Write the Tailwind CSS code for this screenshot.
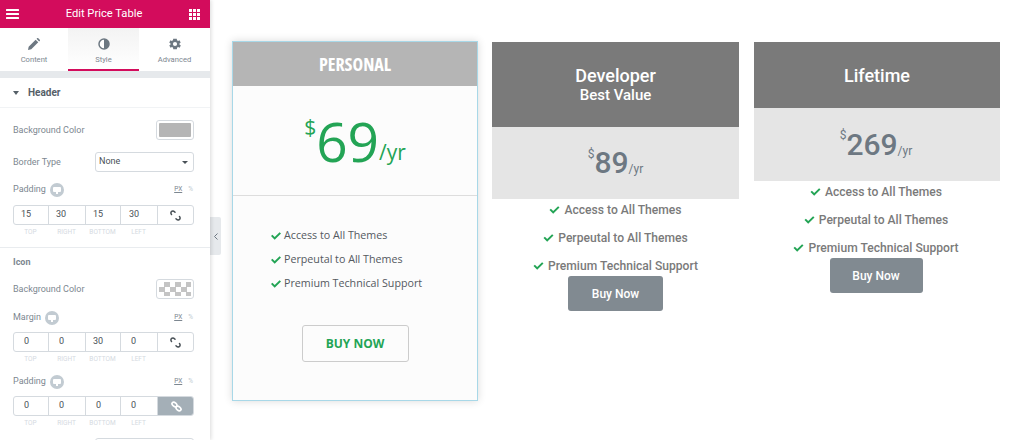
<!DOCTYPE html>
<html lang="en">
<head>
  <meta charset="UTF-8" />
  <meta name="viewport" content="width=device-width, initial-scale=1" />
  <title>Edit Price Table</title>
  <script src="https://cdn.jsdelivr.net/npm/@tailwindcss/browser@4"></script>
</head>
<body class="bg-white h-[440px] overflow-hidden flex font-['Roboto',sans-serif]">

  <!-- editor panel -->
  <aside class="w-[210px] h-[440px] shrink-0 bg-white overflow-hidden flex flex-col text-[#7d8790] shadow-[1px_0_4px_rgba(0,0,0,0.15)] z-10">
    <div class="h-[28px] shrink-0 bg-[#d30c5c] flex items-center justify-between pl-[6px] pr-[10px] text-white">
      <svg width="13" height="10" viewBox="0 0 13 10" fill="white"><rect width="13" height="2" y="0" rx="0.5"/><rect width="13" height="2" y="4" rx="0.5"/><rect width="13" height="2" y="8" rx="0.5"/></svg>
      <span class="text-[11.2px]">Edit Price Table</span>
      <svg width="11" height="11" viewBox="0 0 11 11" fill="white"><rect width="3" height="3"/><rect x="4" width="3" height="3"/><rect x="8" width="3" height="3"/><rect y="4" width="3" height="3"/><rect x="4" y="4" width="3" height="3"/><rect x="8" y="4" width="3" height="3"/><rect y="8" width="3" height="3"/><rect x="4" y="8" width="3" height="3"/><rect x="8" y="8" width="3" height="3"/></svg>
    </div>

    <div class="h-[43px] shrink-0 flex">
      <div class="w-[68px] flex flex-col items-center pt-[10px] gap-[5px]">
        <svg width="12" height="12" viewBox="0 0 11 11" fill="#6d7882"><path d="M0 11l.6-3L7 1.600 9.400 4 3 10.400zM7.800.800l.6-.6c.3-.3.7-.3 1 0l1.400 1.400c.3.3.3.7 0 1l-.6.6z"/></svg>
        <span class="text-[7.6px] leading-[10px]">Content</span>
      </div>
      <div class="w-[71px] flex flex-col items-center pt-[10px] gap-[5px] bg-gradient-to-b from-[#f3f3f3] to-white border-b-2 border-[#d30c5c]">
        <svg width="12" height="12" viewBox="0 0 12 12"><circle cx="6" cy="6" r="5" fill="white" stroke="#6d7882" stroke-width="1.500"/><path d="M6 1a5 5 0 0 1 0 10z" fill="#6d7882"/></svg>
        <span class="text-[7.6px] leading-[10px]">Style</span>
      </div>
      <div class="w-[71px] flex flex-col items-center pt-[10px] gap-[5px]">
        <svg width="12" height="12" viewBox="3 2 18 20" fill="#6d7882"><path fill-rule="evenodd" d="M19.400 13a7.600 7.600 0 0 0 0-2l2.100-1.600-2-3.500-2.500 1a7.500 7.500 0 0 0-1.700-1L15 3.200h-6l-.4 2.700a7.500 7.500 0 0 0-1.700 1l-2.500-1-2 3.500L4.600 11a7.600 7.600 0 0 0 0 2l-2.100 1.600 2 3.500 2.500-1a7.500 7.500 0 0 0 1.700 1l.4 2.700h6l.4-2.700a7.500 7.500 0 0 0 1.700-1l2.500 1 2-3.500zM12 15.500a3.500 3.500 0 1 1 0-7 3.500 3.500 0 0 1 0 7z"/></svg>
        <span class="text-[7.6px] leading-[10px]">Advanced</span>
      </div>
    </div>

    <div class="h-[7px] shrink-0 bg-[#e6e9ec]"></div>

    <!-- Header section -->
    <div class="h-[30px] shrink-0 flex items-center pl-[13px] gap-[9px] border-b border-[#f1f3f5]">
      <svg width="6" height="4" viewBox="0 0 6 4" fill="#556068"><path d="M0 0h6L3 4z"/></svg>
      <span class="text-[10px] font-bold text-[#556068]">Header</span>
    </div>

    <div class="pl-[13px] pr-[16px]">
      <div class="h-[20px] mt-[12px] flex items-center justify-between">
        <span class="text-[9px] mt-[2px]">Background Color</span>
        <div class="w-[38px] h-[20px] border border-[#d5dadf] rounded-[3px] p-[2px]"><div class="w-full h-full bg-[#b5b5b5] rounded-[1px]"></div></div>
      </div>
      <div class="h-[20px] mt-[12px] flex items-center justify-between">
        <span class="text-[9px] mt-[2px]">Border Type</span>
        <div class="w-[99px] h-[20px] border border-[#d5dadf] rounded-[3px] flex items-center justify-between pl-[3px] pr-[5px] text-[9px] text-[#495157]">
          None
          <svg width="6" height="3" viewBox="0 0 6 3" fill="#495157"><path d="M0 0h6L3 3z"/></svg>
        </div>
      </div>

      <div class="flex items-center justify-between mt-[9px] h-[18px]">
        <div class="flex items-center gap-[4px]">
          <span class="text-[9px]">Padding</span>
          <span class="w-[14px] h-[14px] rounded-full bg-[#c2cbd2] flex items-center justify-center"><svg width="8" height="7" viewBox="0 0 8 7" fill="white"><rect width="8" height="5" rx="1"/><rect x="3" y="5" width="2" height="2"/></svg></span>
        </div>
        <div class="flex items-center gap-[6px] text-[6.5px] pr-[1px]"><span class="underline">PX</span><span class="text-[#c2cbd2]">%</span></div>
      </div>

      <div class="grid grid-cols-[35px_37px_35px_37px_35px] h-[20px] mt-[6px] border border-[#d5dadf] rounded-[3px] text-[9px] text-[#495157]">
        <div class="border-r border-[#d5dadf] flex items-center pl-[7px]">15</div>
        <div class="border-r border-[#d5dadf] flex items-center pl-[7px]">30</div>
        <div class="border-r border-[#d5dadf] flex items-center pl-[7px]">15</div>
        <div class="border-r border-[#d5dadf] flex items-center pl-[8px]">30</div>
        <div class="flex items-center justify-center">
          <svg width="11" height="11" viewBox="0 0 11 11" fill="none" stroke="#495157" stroke-width="1.500" stroke-linecap="round"><path d="M1.500 4.500C.5 3.500.8 1.800 2 1.200c.9-.4 1.800-.2 2.500.5l.5.5M9.500 6.500c1 1 .7 2.700-.5 3.300-.9.4-1.800.2-2.500-.5L6 8.800"/></svg>
        </div>
      </div>
      <div class="grid grid-cols-[35px_37px_35px_37px_35px] h-[16px] text-[6.5px] text-[#d5dadf] text-center items-center">
        <span>TOP</span><span>RIGHT</span><span>BOTTOM</span><span>LEFT</span><span></span>
      </div>
    </div>

    <div class="h-px mt-[6px] shrink-0 bg-[#e9ecef]"></div>

    <div class="pl-[13px] pr-[16px]">
      <div class="text-[9px] font-bold mt-[9px] leading-[11px]">Icon</div>
      <div class="h-[20px] mt-[11px] flex items-center justify-between">
        <span class="text-[9px] mt-[2px]">Background Color</span>
        <div class="w-[38px] h-[20px] border border-[#d5dadf] rounded-[3px] p-[2px]">
          <div class="w-full h-full bg-[repeating-conic-gradient(#c4c4c4_0_25%,#ffffff_0_50%)] bg-[length:11px_10px]"></div>
        </div>
      </div>

      <div class="flex items-center justify-between mt-[10px] h-[18px]">
        <div class="flex items-center gap-[4px]">
          <span class="text-[9px]">Margin</span>
          <span class="w-[14px] h-[14px] rounded-full bg-[#c2cbd2] flex items-center justify-center"><svg width="8" height="7" viewBox="0 0 8 7" fill="white"><rect width="8" height="5" rx="1"/><rect x="3" y="5" width="2" height="2"/></svg></span>
        </div>
        <div class="flex items-center gap-[6px] text-[6.5px] pr-[1px]"><span class="underline">PX</span><span class="text-[#c2cbd2]">%</span></div>
      </div>
      <div class="grid grid-cols-[35px_37px_35px_37px_35px] h-[20px] mt-[5px] border border-[#d5dadf] rounded-[3px] text-[9px] text-[#495157]">
        <div class="border-r border-[#d5dadf] flex items-center pl-[10px]">0</div>
        <div class="border-r border-[#d5dadf] flex items-center pl-[10px]">0</div>
        <div class="border-r border-[#d5dadf] flex items-center pl-[7px]">30</div>
        <div class="border-r border-[#d5dadf] flex items-center pl-[10px]">0</div>
        <div class="flex items-center justify-center">
          <svg width="11" height="11" viewBox="0 0 11 11" fill="none" stroke="#495157" stroke-width="1.500" stroke-linecap="round"><path d="M1.500 4.500C.5 3.500.8 1.800 2 1.200c.9-.4 1.800-.2 2.500.5l.5.5M9.500 6.500c1 1 .7 2.700-.5 3.300-.9.4-1.800.2-2.500-.5L6 8.800"/></svg>
        </div>
      </div>
      <div class="grid grid-cols-[35px_37px_35px_37px_35px] h-[16px] text-[6.5px] text-[#d5dadf] text-center items-center">
        <span>TOP</span><span>RIGHT</span><span>BOTTOM</span><span>LEFT</span><span></span>
      </div>

      <div class="flex items-center justify-between mt-[5px] h-[18px]">
        <div class="flex items-center gap-[4px]">
          <span class="text-[9px]">Padding</span>
          <span class="w-[14px] h-[14px] rounded-full bg-[#c2cbd2] flex items-center justify-center"><svg width="8" height="7" viewBox="0 0 8 7" fill="white"><rect width="8" height="5" rx="1"/><rect x="3" y="5" width="2" height="2"/></svg></span>
        </div>
        <div class="flex items-center gap-[6px] text-[6.5px] pr-[1px]"><span class="underline">PX</span><span class="text-[#c2cbd2]">%</span></div>
      </div>
      <div class="grid grid-cols-[35px_37px_35px_37px_36px] h-[20px] mt-[5px] border border-[#d5dadf] rounded-[3px] overflow-hidden text-[9px] text-[#495157]">
        <div class="border-r border-[#d5dadf] flex items-center pl-[10px]">0</div>
        <div class="border-r border-[#d5dadf] flex items-center pl-[10px]">0</div>
        <div class="border-r border-[#d5dadf] flex items-center pl-[10px]">0</div>
        <div class="border-r border-[#d5dadf] flex items-center pl-[10px]">0</div>
        <div class="flex items-center justify-center bg-[#a4afb7]">
          <svg width="11" height="11" viewBox="0 0 11 11" fill="none" stroke="white" stroke-width="1.700"><ellipse cx="3.500" cy="3.500" rx="2.800" ry="1.900" transform="rotate(40 3.500 3.500)"/><ellipse cx="7.500" cy="7.500" rx="2.800" ry="1.900" transform="rotate(40 7.500 7.500)"/></svg>
        </div>
      </div>
      <div class="grid grid-cols-[35px_37px_35px_37px_35px] h-[16px] text-[6.5px] text-[#d5dadf] text-center items-center">
        <span>TOP</span><span>RIGHT</span><span>BOTTOM</span><span>LEFT</span><span></span>
      </div>
      <div class="ml-[82px] h-[20px] mt-[6px] border border-[#d5dadf] rounded-[3px]"></div>
    </div>
  </aside>

  <!-- preview -->
  <main class="relative flex-1 h-[440px] pl-[22px] pr-[23px] pt-[41px]">
    <button class="absolute left-0 top-[217px] w-[11px] h-[38px] bg-[#e6e9ec] flex items-center justify-center rounded-r-[2px]">
      <svg width="4" height="7" viewBox="0 0 4 7" fill="none" stroke="#6d7882" stroke-width="1"><path d="M3.500.500.500 3.500l3 3"/></svg>
    </button>

    <div class="grid grid-cols-[246px_247px_247px] gap-x-[14px] items-start">

      <!-- personal, selected -->
      <div class="h-[360px] bg-[#fcfcfc] border-[1.500px] border-[#a8d8e8] shadow-[0_0_8px_rgba(0,0,0,0.15)] font-['Open_Sans',sans-serif]">
        <div class="h-[44px] bg-[#b5b5b5] flex items-center justify-center text-white text-[18px] font-bold [font-stretch:75%]">PERSONAL</div>
        <div class="h-[110px] border-b border-[#dddddd] flex items-center justify-center text-[#23a455]">
          <span class="text-[21px] leading-none self-start mt-[31px]">$</span>
          <span class="text-[55px] leading-none">69</span>
          <span class="text-[21px] leading-none mt-[24px]">/yr</span>
        </div>
        <ul class="pt-[31px] pl-[38px] text-[10.7px] text-[#54595f] space-y-[7px]">
          <li class="h-[17px] flex items-center gap-[3px]"><svg width="10" height="8" viewBox="0 0 10 8" fill="#23a455"><path d="M3.700 7.800 0 4.100 1.400 2.700 3.700 5 8.600.2 10 1.600z"/></svg>Access to All Themes</li>
          <li class="h-[17px] flex items-center gap-[3px]"><svg width="10" height="8" viewBox="0 0 10 8" fill="#23a455"><path d="M3.700 7.800 0 4.100 1.400 2.700 3.700 5 8.600.2 10 1.600z"/></svg>Perpeutal to All Themes</li>
          <li class="h-[17px] flex items-center gap-[3px]"><svg width="10" height="8" viewBox="0 0 10 8" fill="#23a455"><path d="M3.700 7.800 0 4.100 1.400 2.700 3.700 5 8.600.2 10 1.600z"/></svg>Premium Technical Support</li>
        </ul>
        <div class="mt-[33px] flex justify-center">
          <button class="w-[107px] h-[37px] border border-[#cccccc] rounded-[3px] text-[#23a455] text-[12px] font-bold">BUY NOW</button>
        </div>
      </div>

      <!-- developer -->
      <div class="mt-[1px] text-center">
        <div class="h-[85px] bg-[#7a7a7a] text-white flex flex-col items-center justify-center font-medium">
          <span class="text-[18px] leading-[21px]">Developer</span>
          <span class="text-[15px] leading-[18px]">Best Value</span>
        </div>
        <div class="h-[72px] bg-[#e5e5e5] flex items-center justify-center text-[#6d7882]">
          <span class="text-[12px] leading-none self-start mt-[21px]">$</span>
          <span class="text-[30px] leading-none font-medium">89</span>
          <span class="text-[12px] leading-none mt-[12px]">/yr</span>
        </div>
        <ul class="text-[12.1px] font-medium text-[#7a7a7a]">
          <li class="h-[28px] flex items-center justify-center gap-[4px] mt-[-3px]"><svg width="11" height="8" viewBox="0 0 10 8" fill="#23a455"><path d="M3.700 7.800 0 4.100 1.400 2.700 3.700 5 8.600.2 10 1.600z"/></svg>Access to All Themes</li>
          <li class="h-[28px] flex items-center justify-center gap-[4px]"><svg width="11" height="8" viewBox="0 0 10 8" fill="#23a455"><path d="M3.700 7.800 0 4.100 1.400 2.700 3.700 5 8.600.2 10 1.600z"/></svg>Perpeutal to All Themes</li>
          <li class="h-[28px] flex items-center justify-center gap-[4px]"><svg width="11" height="8" viewBox="0 0 10 8" fill="#23a455"><path d="M3.700 7.800 0 4.100 1.400 2.700 3.700 5 8.600.2 10 1.600z"/></svg>Premium Technical Support</li>
        </ul>
        <button class="block mx-auto mt-[-4px] w-[95px] h-[35px] bg-[#818a91] rounded-[3px] text-white text-[12px] font-medium">Buy Now</button>
      </div>

      <!-- lifetime -->
      <div class="mt-[1px] ml-px text-center">
        <div class="h-[66px] bg-[#7a7a7a] text-white flex items-center justify-center font-medium text-[18px]">Lifetime</div>
        <div class="h-[73px] bg-[#e5e5e5] flex items-center justify-center text-[#6d7882] pr-[2px]">
          <span class="text-[12px] leading-none self-start mt-[21px]">$</span>
          <span class="text-[30px] leading-none font-medium">269</span>
          <span class="text-[12px] leading-none mt-[12px]">/yr</span>
        </div>
        <div class="pr-[2px]">
          <ul class="text-[12.1px] font-medium text-[#7a7a7a]">
            <li class="h-[28px] flex items-center justify-center gap-[4px] mt-[-3px]"><svg width="11" height="8" viewBox="0 0 10 8" fill="#23a455"><path d="M3.700 7.800 0 4.100 1.400 2.700 3.700 5 8.600.2 10 1.600z"/></svg>Access to All Themes</li>
            <li class="h-[28px] flex items-center justify-center gap-[4px]"><svg width="11" height="8" viewBox="0 0 10 8" fill="#23a455"><path d="M3.700 7.800 0 4.100 1.400 2.700 3.700 5 8.600.2 10 1.600z"/></svg>Perpeutal to All Themes</li>
            <li class="h-[28px] flex items-center justify-center gap-[4px]"><svg width="11" height="8" viewBox="0 0 10 8" fill="#23a455"><path d="M3.700 7.800 0 4.100 1.400 2.700 3.700 5 8.600.2 10 1.600z"/></svg>Premium Technical Support</li>
          </ul>
          <button class="block mx-auto mt-[-4px] w-[93px] h-[35px] bg-[#818a91] rounded-[3px] text-white text-[12px] font-medium">Buy Now</button>
        </div>
      </div>
    </div>
  </main>
</body>
</html>
